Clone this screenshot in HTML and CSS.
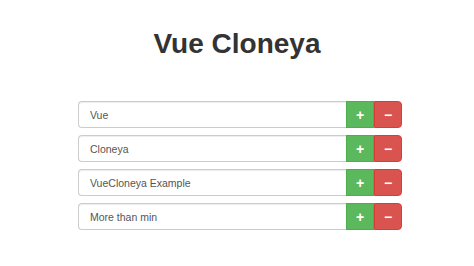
FILE: index.html
```html
<!DOCTYPE html>
<html lang="en">
<head>
    <meta charset="UTF-8">
    <title>Vue Cloneya</title>
    <link rel="stylesheet" href="styles.css">
</head>
<body>
    <div class="app">
        <h1 class="title">Vue Cloneya</h1>

        <div class="list">
            <div class="input-group">
                <input type="text" class="form-control" value="Vue">
                <button class="btn btn-add">+</button>
                <button class="btn btn-remove">&minus;</button>
            </div>
            <div class="input-group">
                <input type="text" class="form-control" value="Cloneya">
                <button class="btn btn-add">+</button>
                <button class="btn btn-remove">&minus;</button>
            </div>
            <div class="input-group">
                <input type="text" class="form-control" value="VueCloneya Example">
                <button class="btn btn-add">+</button>
                <button class="btn btn-remove">&minus;</button>
            </div>
            <div class="input-group">
                <input type="text" class="form-control" value="More than min">
                <button class="btn btn-add">+</button>
                <button class="btn btn-remove">&minus;</button>
            </div>
        </div>
    </div>
</body>
</html>
```

FILE: styles.css
```css
* {
    margin: 0;
    padding: 0;
    box-sizing: border-box;
}

body {
    background-color: #fff;
    font-family: "Liberation Sans", Arial, sans-serif;
    color: #333;
}

.app {
    padding-top: 24px;
}

.title {
    text-align: center;
    font-size: 28px;
    font-weight: bold;
    line-height: 40px;
    color: #333;
    margin-bottom: 37px;
}

.list {
    width: 324px;
    margin-left: 78px;
    display: flex;
    flex-direction: column;
    gap: 7px;
}

.input-group {
    display: flex;
    height: 27px;
}

.form-control {
    flex: 1;
    min-width: 0;
    height: 27px;
    padding: 0 11px;
    border: 1px solid #ccc;
    border-right: none;
    border-radius: 4px 0 0 4px;
    font-family: "Liberation Sans", Arial, sans-serif;
    font-size: 10.5px;
    color: #555;
    box-shadow: inset 0 1px 1px rgba(0, 0, 0, 0.075);
}

.btn {
    width: 28px;
    height: 27px;
    border: 1px solid transparent;
    color: #fff;
    font-family: "Liberation Sans", Arial, sans-serif;
    font-size: 14px;
    font-weight: bold;
    line-height: 1;
    cursor: pointer;
}

.btn-add {
    background-color: #5cb85c;
    border-color: #4cae4c;
}

.btn-remove {
    background-color: #d9534f;
    border-color: #d43f3a;
    border-radius: 0 4px 4px 0;
}
```
